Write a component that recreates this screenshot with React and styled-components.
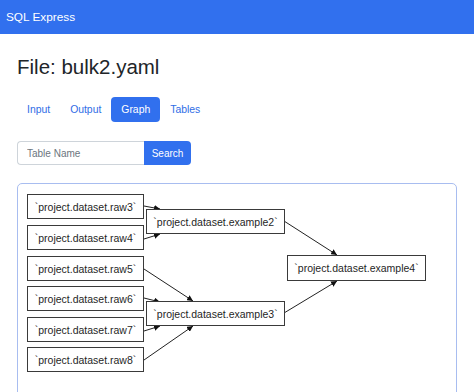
import React from 'react'
import styled, { createGlobalStyle } from 'styled-components'

const GlobalStyle = createGlobalStyle`
    body {
        margin: 0;
        font-family: "Liberation Sans", Arial, sans-serif;
        color: #212529;
        background: #fff;
    }
`;

const Navbar = styled.header`
    height: 34px;
    display: flex;
    align-items: center;
    padding: 0 6px;
    background: #3170ee;
    color: #fff;
    font-size: 11.8px;
`;

const Main = styled.main`
    padding: 0 17px;
`;

const Title = styled.h1`
    margin: 20px 0 0;
    font-size: 20.5px;
    line-height: 25px;
    font-weight: 500;
`;

const Tabs = styled.nav`
    display: flex;
    margin-top: 18px;
`;

const Tab = styled.a`
    height: 25px;
    display: flex;
    align-items: center;
    padding: 0 10px;
    border-radius: 4px;
    font-size: 10.4px;
    color: ${p => (p.$active ? '#fff' : '#2f6de6')};
    background: ${p => (p.$active ? '#3170ee' : 'transparent')};
    cursor: pointer;
`;

const SearchForm = styled.form`
    display: flex;
    height: 24px;
    margin-top: 19px;
`;

const SearchInput = styled.input`
    box-sizing: border-box;
    width: 127px;
    height: 100%;
    padding: 0 9px;
    border: 1px solid #ced4da;
    border-right: none;
    border-radius: 4px 0 0 4px;
    font-family: inherit;
    font-size: 10px;
    color: #212529;
    &::placeholder {
        color: #6c757d;
    }
`;

const SearchButton = styled.button`
    width: 47px;
    height: 100%;
    border: none;
    border-radius: 0 4px 4px 0;
    background: #3170ee;
    color: #fff;
    font-family: inherit;
    font-size: 10px;
    padding: 0;
`;

const GraphCard = styled.section`
    position: relative;
    margin-top: 18px;
    height: 230px;
    border: 1px solid #a8bdf0;
    border-radius: 5px;
`;

const Edges = styled.svg`
    position: absolute;
    inset: 0;
    width: 100%;
    height: 100%;
    overflow: visible;
`;

const Node = styled.div`
    position: absolute;
    box-sizing: border-box;
    left: ${p => p.$x}px;
    top: ${p => p.$y}px;
    width: ${p => p.$w}px;
    height: ${p => p.$h}px;
    display: flex;
    align-items: center;
    justify-content: center;
    border: 1px solid #3a3a3a;
    background: #fff;
    font-size: 10.5px;
    color: #1f1f1f;
    white-space: nowrap;
`;

const nodes = [
    { id: 'raw3', x: 9, y: 10, w: 117, h: 25 },
    { id: 'raw4', x: 9, y: 41, w: 117, h: 25 },
    { id: 'raw5', x: 9, y: 72, w: 117, h: 25 },
    { id: 'raw6', x: 9, y: 102, w: 117, h: 25 },
    { id: 'raw7', x: 9, y: 133, w: 117, h: 25 },
    { id: 'raw8', x: 9, y: 163, w: 117, h: 25 },
    { id: 'example2', x: 128, y: 25, w: 139, h: 25 },
    { id: 'example3', x: 128, y: 117, w: 139, h: 25 },
    { id: 'example4', x: 269, y: 71, w: 139, h: 26 },
];

const edges = [
    [126, 22, 142, 25],
    [126, 55, 142, 50],
    [126, 85, 175, 117],
    [126, 114, 142, 118],
    [126, 147, 142, 142],
    [126, 176, 175, 142],
    [266, 37, 319, 71],
    [266, 129, 319, 97],
];

export default function App() {
    return (
        <>
            <GlobalStyle />
            <Navbar>SQL Express</Navbar>
            <Main>
                <Title>File: bulk2.yaml</Title>
                <Tabs>
                    <Tab>Input</Tab>
                    <Tab>Output</Tab>
                    <Tab $active>Graph</Tab>
                    <Tab>Tables</Tab>
                </Tabs>
                <SearchForm onSubmit={e => e.preventDefault()}>
                    <SearchInput placeholder="Table Name" />
                    <SearchButton type="submit">Search</SearchButton>
                </SearchForm>
                <GraphCard>
                    <Edges>
                        <defs>
                            <marker id="arrow" viewBox="0 0 10 10" refX="10" refY="5"
                                markerWidth="6" markerHeight="6" markerUnits="userSpaceOnUse" orient="auto">
                                <path d="M0 0 L10 5 L0 10 z" fill="#111" />
                            </marker>
                        </defs>
                        {edges.map(([x1, y1, x2, y2], i) => (
                            <line key={i} x1={x1} y1={y1} x2={x2} y2={y2}
                                stroke="#222" strokeWidth="1" markerEnd="url(#arrow)" />
                        ))}
                    </Edges>
                    {nodes.map(n => (
                        <Node key={n.id} $x={n.x} $y={n.y} $w={n.w} $h={n.h}>
                            `project.dataset.{n.id}`
                        </Node>
                    ))}
                </GraphCard>
            </Main>
        </>
    )
}
